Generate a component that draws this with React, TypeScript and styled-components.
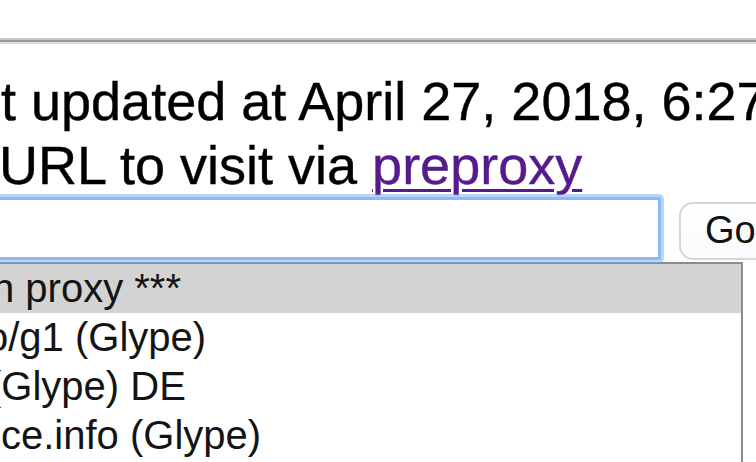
import React, { FC } from 'react';
import styled, { createGlobalStyle } from 'styled-components';

const GlobalStyle = createGlobalStyle`
    html, body {
        margin: 0;
        padding: 0;
        background: #ffffff;
        overflow: hidden;
    }
    body {
        font-family: "Liberation Sans", Arial, sans-serif;
        color: #000;
    }
`;

const Page = styled.div`
    width: 756px;
    height: 462px;
    overflow: hidden;
    padding-top: 38px;
    box-sizing: border-box;
`;

const Rule = styled.div`
    height: 2px;
    background: #9a9a9a;
    border-top: 2px solid #c6c6c6;
    border-bottom: 2px solid #dcdcdc;
`;

const Info = styled.div`
    margin-top: 25px;
    font-size: 54px;
    line-height: 64px;
    white-space: nowrap;
    -webkit-text-stroke: 0.4px #000;
`;

const Line = styled.div<{ $shift: number }>`
    margin-left: ${p => p.$shift}px;
`;

const ProxyLink = styled.a`
    color: #551a8b;
    -webkit-text-stroke: 0.4px #551a8b;
    text-decoration: underline;
    text-decoration-thickness: 3px;
    text-underline-offset: 5px;
`;

const Form = styled.div`
    display: flex;
    align-items: center;
    gap: 18px;
    margin-left: -200px;
`;

const UrlInput = styled.input`
    width: 861px;
    height: 63px;
    box-sizing: border-box;
    border: 3px solid #8db9f7;
    border-radius: 2px;
    box-shadow: 0 0 0 3px rgba(122, 172, 250, 0.5);
    outline: none;
    background: #fff;
    font-size: 40px;
    padding: 0 10px;
    flex-shrink: 0;
`;

const GoButton = styled.button`
    flex-shrink: 0;
    height: 58px;
    margin-top: 4px;
    padding: 0 24px;
    border: 2px solid #d6d6d6;
    border-radius: 14px;
    background: linear-gradient(#ffffff, #fafafa);
    font-family: "Liberation Sans", Arial, sans-serif;
    font-size: 38px;
    color: #111;
`;

const Listbox = styled.div`
    margin-top: 2px;
    margin-left: -200px;
    width: 943px;
    height: 300px;
    box-sizing: border-box;
    border: 2px solid #8c8c8c;
    background: #fff;
    overflow: hidden;
`;

const Option = styled.div<{ $active?: boolean; $shift: number }>`
    height: 49px;
    line-height: 49px;
    font-size: 40px;
    white-space: nowrap;
    color: #141414;
    padding-left: ${p => 200 + p.$shift}px;
    background: ${p => (p.$active ? '#d3d3d3' : 'transparent')};
`;

const options = [
    { text: 'n proxy ***', shift: -10 },
    { text: 'o/g1 (Glype)', shift: -16 },
    { text: '(Glype) DE', shift: -14 },
    { text: 'ce.info (Glype)', shift: -1 },
];

const App: FC = () => {
    return (
        <Page>
            <GlobalStyle />
            <Rule />
            <Info>
                <Line $shift={1}>t updated at April 27, 2018, 6:27</Line>
                <Line $shift={-1}>
                    URL to visit via <ProxyLink href="#">preproxy</ProxyLink>
                </Line>
            </Info>
            <Form>
                <UrlInput type="text" />
                <GoButton>Go</GoButton>
            </Form>
            <Listbox>
                {options.map((o, i) => (
                    <Option key={i} $active={i === 0} $shift={o.shift}>
                        {o.text}
                    </Option>
                ))}
            </Listbox>
        </Page>
    );
};

export default App;
